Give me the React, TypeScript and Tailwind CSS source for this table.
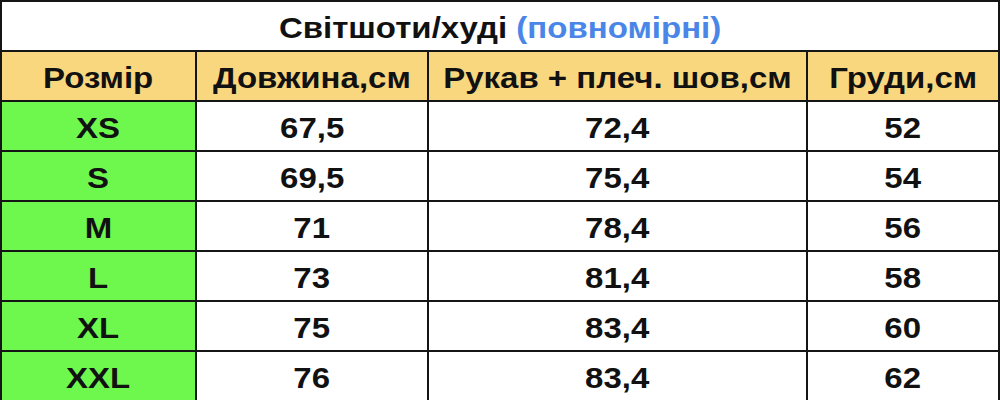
const rows = [
  ["XS", "67,5", "72,4", "52"],
  ["S", "69,5", "75,4", "54"],
  ["M", "71", "78,4", "56"],
  ["L", "73", "81,4", "58"],
  ["XL", "75", "83,4", "60"],
  ["XXL", "76", "83,4", "62"],
];

const headers = ["Розмір", "Довжина,см", "Рукав + плеч. шов,см", "Груди,см"];

function T({ children }: { children: React.ReactNode }) {
  return <span className="inline-block scale-x-[1.1] whitespace-nowrap">{children}</span>;
}

export default function App() {
  return (
    <div className="w-[1000px] h-[400px] overflow-hidden bg-white font-['Liberation_Sans',Arial,sans-serif] font-bold text-[30px] leading-none text-[#111]">
      <table className="table-fixed border-collapse w-[998px]">
        <colgroup>
          <col className="w-[195px]" />
          <col className="w-[232px]" />
          <col className="w-[379px]" />
          <col className="w-[192px]" />
        </colgroup>
        <tbody>
          <tr className="h-[50px]">
            <td colSpan={4} className="border-2 border-[#151515] text-center align-middle pt-1">
              <T>
                Світшоти/худі <span className="text-[#4a86e8]">(повномірні)</span>
              </T>
            </td>
          </tr>
          <tr className="h-[50px] bg-[#f9d77e]">
            {headers.map((h) => (
              <td key={h} className="border-2 border-[#151515] text-center align-middle pt-1">
                <T>{h}</T>
              </td>
            ))}
          </tr>
          {rows.map((r) => (
            <tr key={r[0]} className="h-[50px]">
              {r.map((c, i) => (
                <td
                  key={i}
                  className={
                    "border-2 border-[#151515] text-center align-middle pt-1 " +
                    (i === 0 ? "bg-[#6ef84e]" : "bg-white")
                  }
                >
                  <T>{c}</T>
                </td>
              ))}
            </tr>
          ))}
        </tbody>
      </table>
    </div>
  );
}
